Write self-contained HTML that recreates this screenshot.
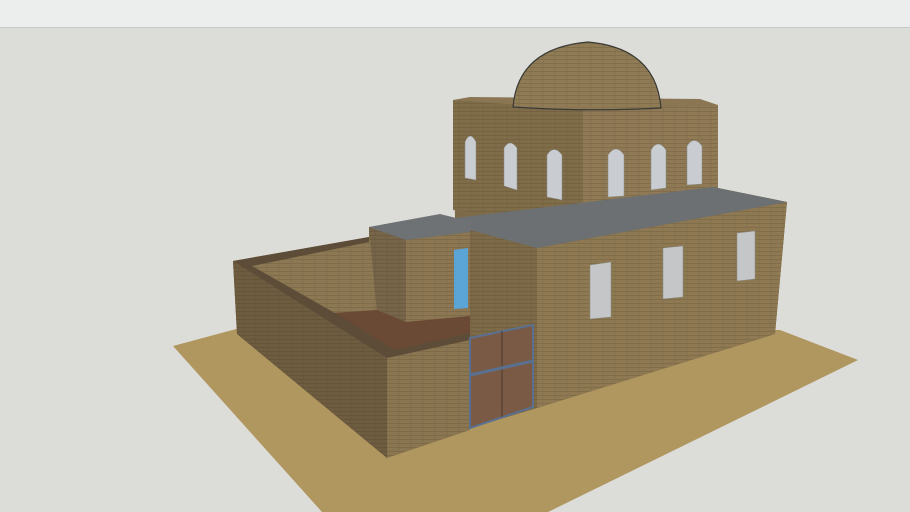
<!DOCTYPE html>
<html><head><meta charset="utf-8"><style>
html,body{margin:0;padding:0;width:910px;height:512px;overflow:hidden;background:#dcdcd8}
svg{display:block}
</style></head><body>
<svg width="910" height="512" viewBox="0 0 910 512" xmlns="http://www.w3.org/2000/svg">
<defs>
<pattern id="br" width="12" height="4" patternUnits="userSpaceOnUse">
<line x1="0" y1="3.5" x2="12" y2="3.5" stroke="#3a2e1c" stroke-opacity=".16" stroke-width="1"/>
<line x1="3" y1="0" x2="3" y2="3" stroke="#3a2e1c" stroke-opacity=".1"/>
</pattern>
</defs>
<rect x="0" y="0" width="910" height="27" fill="#eceeee"/>
<rect x="0" y="27" width="910" height="1" fill="#c8cac8"/>
<polygon points="173,346 240,328 780,330 858,360 548,512 322,512" fill="#b0965f"/>
<polygon points="233,261 369,237 369,227 455,218 453,100 718,105 718,188 787,202 775,334 537,408 470,428 387,458 237,334" fill="#7d6a48"/>
<polygon points="453,100 583,110 583,225 453,210" fill="#7f6c49"/>
<polygon points="583,110 718,105 718,188 583,225" fill="#8f7a55"/>
<polygon points="453,100 583,110 583,225 453,210" fill="url(#br)"/>
<polygon points="583,110 718,105 718,188 583,225" fill="url(#br)"/>
<polygon points="453,100 470,97 700,99 718,105 583,110" fill="#8a7652"/>
<path d="M513,107 Q518,48 588,42 Q656,48 661,108 Q588,112 513,107 Z" fill="#8f7b55" stroke="#3a3a36" stroke-width="1.2"/>
<path d="M513,107 Q518,48 588,42 Q656,48 661,108 Z" fill="url(#br)"/>
<g fill="#c9ccd0" stroke="#8a8c88" stroke-width=".5">
<path d="M465,178 V142 Q470,130 476,142 V180 Z"/>
<path d="M504,186 V148 Q510,138 517,148 V190 Z"/>
<path d="M547,197 V155 Q554,144 562,155 V200 Z"/>
<path d="M608,197 V155 Q616,143 624,155 V196 Z"/>
<path d="M651,190 V150 Q658,138 666,150 V188 Z"/>
<path d="M687,185 V146 Q694,135 702,146 V184 Z"/>
</g>
<polygon points="470,230 537,248 537,408 470,428" fill="#7d6a48"/>
<polygon points="537,248 787,202 775,334 537,408" fill="#8e7953"/>
<polygon points="470,230 537,248 537,408 470,428" fill="url(#br)"/>
<polygon points="537,248 787,202 775,334 537,408" fill="url(#br)"/>
<polygon points="455,218 713,187 787,202 537,248 470,230" fill="#6d7072"/>
<g fill="#c4c6c8" stroke="#8a8c88" stroke-width=".5">
<polygon points="590,265 611,262 611,317 590,319"/>
<polygon points="663,248 683,246 683,297 663,299"/>
<polygon points="737,233 755,231 755,279 737,281"/>
</g>
<polygon points="369,227 406,240 406,322 376,311" fill="#77654a"/>
<polygon points="406,240 470,232 470,316 406,322" fill="#8c7752"/>
<polygon points="369,227 406,240 406,322 376,311" fill="url(#br)"/>
<polygon points="406,240 470,232 470,316 406,322" fill="url(#br)"/>
<polygon points="369,227 440,214 472,222 470,232 406,240" fill="#6f7274"/>
<polygon points="454,250 468,248 468,308 454,309" fill="#5aa4d6"/>
<polygon points="250,265 370,240 377,312 340,316" fill="#8c7853"/>
<polygon points="250,265 370,240 377,312 340,316" fill="url(#br)"/>
<polygon points="333,313 377,310 406,322 470,316 470,336 395,352" fill="#6a4a34"/>
<polygon points="233,261 369,237 369,242 252,266 340,316 395,350 470,333 470,341 387,358" fill="#5c4c38"/>
<polygon points="233,261 387,358 387,458 237,334" fill="#6e5c40"/>
<polygon points="387,358 470,340 470,430 387,458" fill="#8a7651"/>
<polygon points="233,261 387,358 387,458 237,334" fill="url(#br)"/>
<polygon points="387,358 470,340 470,430 387,458" fill="url(#br)"/>
<polygon points="470,338 533,325 533,407 470,428" fill="#7a5a44" stroke="#5a7090" stroke-width="2"/>
<line x1="502" y1="331" x2="502" y2="417" stroke="#4a3a30" stroke-width="1"/>
<line x1="470" y1="375" x2="533" y2="361" stroke="#5a7090" stroke-width="3"/>
</svg>
</body></html>
